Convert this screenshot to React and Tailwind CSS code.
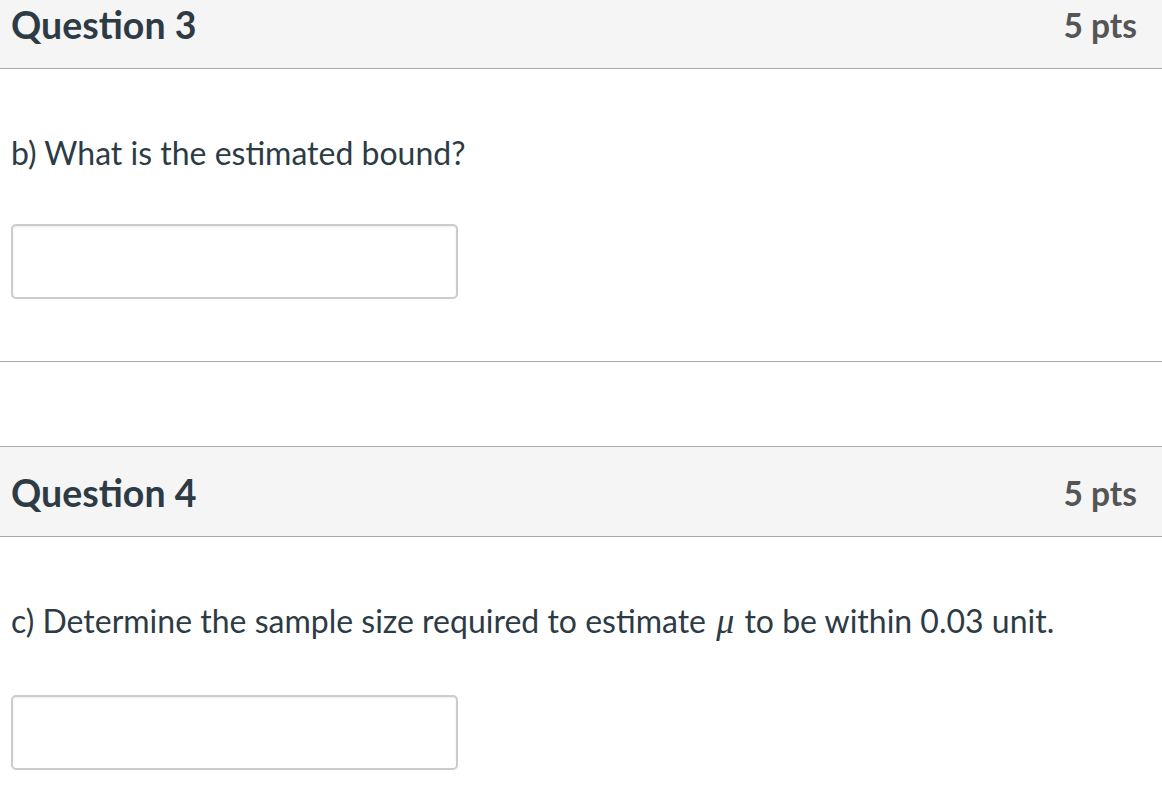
const QuestionHeader = ({ title, points, className }) => (
  <div
    className={`flex justify-between items-center bg-[#f5f5f5] border-b border-[#aaaaaa] pl-[11px] pr-[25px] ${className}`}
  >
    <h2 className="text-[37.5px] leading-[40px] font-bold text-[#2d3b45]">{title}</h2>
    <span className="text-[33.5px] leading-[40px] font-bold text-[#555555]">{points}</span>
  </div>
);

const AnswerBox = () => (
  <input
    type="text"
    className="block w-[447px] h-[75px] border-2 border-[#cccccc] rounded-[5px] bg-white outline-none shadow-[inset_0_1px_2px_rgba(0,0,0,0.08)]"
  />
);

export default function App() {
  return (
    <div className="min-h-screen bg-white font-['Lato','Noto_Sans',sans-serif] text-[#2d3b45]">
      {/* Question 3 */}
      <div className="border-b border-[#aaaaaa]">
        <QuestionHeader title="Question 3" points="5 pts" className="h-[69px] pb-[19px]" />
        <div className="pl-[11px] pt-[64px] pb-[62px]">
          <p className="text-[32px] leading-[39px]">b) What is the estimated bound?</p>
          <div className="mt-[52px]">
            <AnswerBox />
          </div>
        </div>
      </div>

      <div className="h-[84px]" />

      {/* Question 4 */}
      <div className="border-t border-[#aaaaaa]">
        <QuestionHeader title="Question 4" points="5 pts" className="h-[90px] pt-[3px]" />
        <div className="pl-[11px] pt-[64px] pb-[40px]">
          <p className="text-[32px] leading-[39px]">
            c) Determine the sample size required to estimate{' '}
            <span className="font-['Liberation_Serif',serif] italic text-[36px] px-[2px]">μ</span> to be
            within 0.03 unit.
          </p>
          <div className="mt-[54px]">
            <AnswerBox />
          </div>
        </div>
      </div>
    </div>
  );
}
